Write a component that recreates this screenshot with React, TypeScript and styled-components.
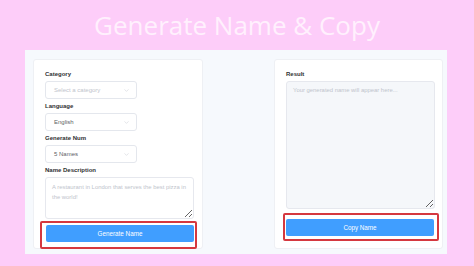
import React, { useState } from 'react';
import styled, { createGlobalStyle } from 'styled-components';
import { ChevronDown } from 'lucide-react';

const GlobalStyle = createGlobalStyle`
  body {
    margin: 0;
    font-family: "Liberation Sans", Arial, sans-serif;
  }
`;

const Page = styled.div`
  width: 474px;
  height: 266px;
  background-color: #fdcdf9;
  overflow: hidden;
`;

const Title = styled.h1`
  margin: 0;
  height: 50px;
  display: flex;
  align-items: center;
  justify-content: center;
  font-family: "Open Sans", sans-serif;
  font-weight: 400;
  font-size: 26px;
  color: #fff0fd;
`;

const Panel = styled.div`
  margin-left: 25px;
  width: 422px;
  height: 204px;
  box-sizing: border-box;
  padding: 9px 4px 5px 8px;
  background-color: #f6f9fd;
  display: flex;
  justify-content: space-between;
`;

const Card = styled.div<{ $width: number }>`
  width: ${(p) => p.$width}px;
  box-sizing: border-box;
  padding: 9px 10px 0 11px;
  background: #fff;
  border: 1px solid #eef0f4;
  border-radius: 3px;
  display: flex;
  flex-direction: column;
`;

const Label = styled.div`
  height: 10px;
  line-height: 10px;
  font-size: 6px;
  font-weight: bold;
  color: #303133;
  margin-bottom: 2px;
`;

const Field = styled.div`
  margin-bottom: 2px;
`;

const Select = styled.div<{ $placeholder?: boolean }>`
  width: 92px;
  height: 18px;
  box-sizing: border-box;
  border: 1px solid #e4e7ed;
  border-radius: 3px;
  padding: 0 6px 0 8px;
  display: flex;
  align-items: center;
  justify-content: space-between;
  font-size: 6px;
  color: ${(p) => (p.$placeholder ? '#c0c4cc' : '#606266')};

  svg {
    color: #c0c4cc;
  }
`;

const TextArea = styled.textarea<{ $height: number; $bg?: string; $padTop: number }>`
  display: block;
  width: 149px;
  height: ${(p) => p.$height}px;
  box-sizing: border-box;
  margin: 0;
  padding: ${(p) => p.$padTop}px 2px 4px 6px;
  border: 1px solid #e6e8ee;
  border-radius: 3px;
  background: ${(p) => p.$bg || '#fff'};
  font-family: "Liberation Sans", Arial, sans-serif;
  font-size: 5.9px;
  line-height: 10px;
  color: #606266;
  outline: none;

  &::placeholder {
    color: #c0c4cc;
  }
`;

const Highlight = styled.div<{ $pad: string; $offset: number; $width: number }>`
  margin-left: ${(p) => p.$offset}px;
  width: ${(p) => p.$width}px;
  box-sizing: border-box;
  border: 2px solid #d5383f;
  border-radius: 2px;
  padding: ${(p) => p.$pad};
`;

const Spacer = styled.div<{ $h: number }>`
  height: ${(p) => p.$h}px;
`;

const Button = styled.button`
  display: block;
  width: 148px;
  height: 17px;
  padding: 0;
  border: none;
  border-radius: 2px;
  background-color: #409eff;
  color: #fff;
  font-family: "Liberation Sans", Arial, sans-serif;
  font-size: 6.3px;
  cursor: pointer;
`;

const SelectBox = ({ value, placeholder }: { value?: string; placeholder?: string }) => (
  <Select $placeholder={!value}>
    <span>{value || placeholder}</span>
    <ChevronDown size={7} strokeWidth={1.5} />
  </Select>
);

export default function App() {
  const [result] = useState('');

  return (
    <Page>
      <GlobalStyle />
      <Title>Generate Name &amp; Copy</Title>
      <Panel>
        <Card $width={170}>
          <Field>
            <Label>Category</Label>
            <SelectBox placeholder="Select a category" />
          </Field>
          <Field>
            <Label>Language</Label>
            <SelectBox value="English" />
          </Field>
          <Field>
            <Label>Generate Num</Label>
            <SelectBox value="5 Names" />
          </Field>
          <Field>
            <Label>Name Description</Label>
            <TextArea
              $height={42}
              $padTop={4}
              placeholder={'A restaurant in London that serves the best pizza in\nthe world!'}
            />
          </Field>
          <Highlight $offset={-5} $width={157} $pad="2px 1px 5px 4px">
            <Button>Generate Name</Button>
          </Highlight>
        </Card>
        <Card $width={169}>
          <Label>Result</Label>
          <TextArea
            $height={128}
            $padTop={3}
            $bg="#f5f7fa"
            readOnly
            value={result}
            placeholder="Your generated name will appear here..."
          />
          <Spacer $h={4} />
          <Highlight $offset={-3} $width={156} $pad="4px 2px 3px 1px">
            <Button>Copy Name</Button>
          </Highlight>
        </Card>
      </Panel>
    </Page>
  );
}
